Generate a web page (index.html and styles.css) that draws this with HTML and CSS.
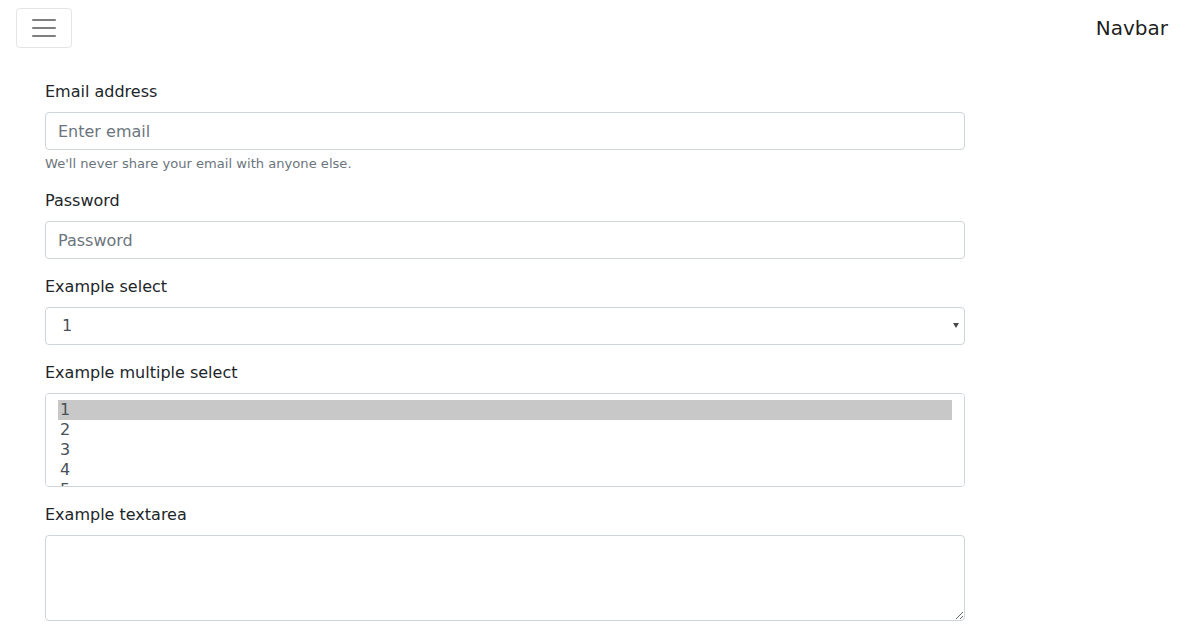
FILE: index.html
```html
<!DOCTYPE html>
<html lang="en">
<head>
<meta charset="utf-8">
<title>Form</title>
<link rel="stylesheet" href="styles.css">
</head>
<body>
<nav class="navbar">
  <button class="toggler" type="button" aria-label="Toggle navigation">
    <svg class="toggler-icon" viewBox="0 0 30 30" width="30" height="30"><path stroke="rgba(0,0,0,0.5)" stroke-linecap="round" stroke-miterlimit="10" stroke-width="2" d="M4 7h22M4 15h22M4 23h22"/></svg>
  </button>
  <a class="brand" href="#">Navbar</a>
</nav>
<div class="container">
  <div class="col">
    <form>
      <div class="form-group">
        <label for="email">Email address</label>
        <input type="email" class="form-control" id="email" placeholder="Enter email">
        <small class="help">We'll never share your email with anyone else.</small>
      </div>
      <div class="form-group">
        <label for="pw">Password</label>
        <input type="password" class="form-control" id="pw" placeholder="Password">
      </div>
      <div class="form-group">
        <label for="sel1">Example select</label>
        <div class="select-wrap">
          <select class="form-control single" id="sel1">
            <option>1</option><option>2</option><option>3</option><option>4</option><option>5</option>
          </select>
        </div>
      </div>
      <div class="form-group">
        <label for="sel2">Example multiple select</label>
        <select multiple class="form-control multi" id="sel2">
          <option selected>1</option><option>2</option><option>3</option><option>4</option><option>5</option>
        </select>
      </div>
      <div class="form-group">
        <label for="ta">Example textarea</label>
        <textarea class="form-control" id="ta" rows="3"></textarea>
      </div>
    </form>
  </div>
</div>
</body>
</html>
```
FILE: styles.css
```css
* { box-sizing: border-box; }
html, body { margin: 0; }
body {
  font-family: "DejaVu Sans", sans-serif;
  font-size: 16px;
  line-height: 1.5;
  color: #212529;
  background: #fff;
}
.navbar {
  display: flex;
  justify-content: space-between;
  align-items: center;
  padding: 8px 16px;
}
.toggler {
  display: block;
  padding: 4px 12px;
  font-size: 20px;
  line-height: 1;
  background: transparent;
  border: 1px solid rgba(0,0,0,0.1);
  border-radius: 4px;
  cursor: pointer;
}
.toggler-icon { display: block; width: 30px; height: 30px; }
.brand {
  display: inline-block;
  padding: 5px 0;
  margin-right: 16px;
  font-size: 20px;
  line-height: 30px;
  color: rgba(0,0,0,0.9);
  text-decoration: none;
  white-space: nowrap;
}
.container {
  width: 1140px;
  margin: 24px auto 0;
  padding: 0 15px;
}
.col {
  width: 950px;
  padding: 0 15px;
  margin-left: -15px;
}
.form-group { margin-bottom: 16px; }
label {
  display: inline-block;
  margin-bottom: 8px;
}
.form-control {
  display: block;
  width: 100%;
  height: 38px;
  padding: 6px 12px;
  font-family: inherit;
  font-size: 16px;
  line-height: 1.5;
  color: #495057;
  background-color: #fff;
  border: 1px solid #ced4da;
  border-radius: 4px;
  margin: 0;
}
.form-control::placeholder { color: #6c757d; opacity: 1; }
.select-wrap { position: relative; }
.select-wrap::after {
  content: "";
  position: absolute;
  right: 6px;
  top: 50%;
  margin-top: -3px;
  width: 0;
  height: 0;
  border-left: 3px solid transparent;
  border-right: 3px solid transparent;
  border-top: 5px solid #4a4a4a;
  pointer-events: none;
}
.form-control.single {
  -webkit-appearance: none;
  appearance: none;
  padding-left: 16px;
}
.form-control.multi { height: auto; }
.form-control.multi option:checked {
  background: #c8c8c8 linear-gradient(#c8c8c8, #c8c8c8);
  color: #495057;
}
textarea.form-control { height: auto; resize: vertical; overflow: auto; }
.help {
  display: block;
  margin-top: 4px;
  font-size: 13.1px;
  line-height: 19.2px;
  color: #6c757d;
}
```
